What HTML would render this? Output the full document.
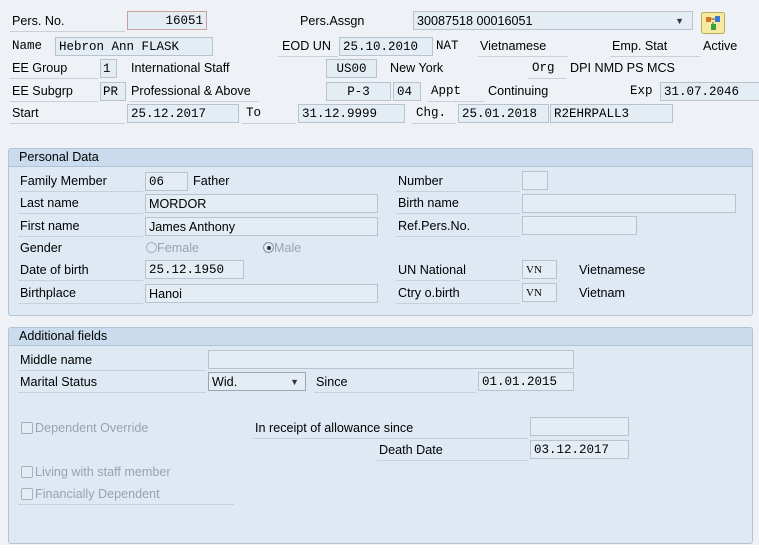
<!DOCTYPE html>
<html><head><meta charset="utf-8"><style>
*{margin:0;padding:0;box-sizing:border-box}
body{width:759px;height:554px;background:#fff;position:relative;overflow:hidden;font-family:"Liberation Sans",sans-serif;font-size:12.6px;color:#000}
#top{position:absolute;left:0;top:0;width:759px;height:545px;background:#eef2f7}
.t{position:absolute;white-space:nowrap;line-height:19px}
.m{font-family:"Liberation Mono",monospace;font-size:12.5px}
.f{position:absolute;height:19px;background:#e4ecf4;border:1px solid #b9c3cd;line-height:18px;padding:0 3px;white-space:nowrap;font-family:"Liberation Mono",monospace;font-size:12.5px}
.fs{font-family:"Liberation Sans",sans-serif;font-size:12.6px}
.u{position:absolute;height:1px;background:#c8d0d8}
.panel{position:absolute;left:8px;width:745px;background:#dfe9f3;border:1px solid #b3c3d3;border-radius:3px}
.ph{height:18px;background:#c9dbec;border-bottom:1px solid #b3c3d3;padding-left:10px;line-height:17px}
.g{color:#9aa3ad}
.cb{position:absolute;width:12px;height:12px;border:1px solid #a9b2bb;border-radius:2px;background:#e4ecf4}
</style></head><body>
<div id="top"></div>

<div class="t" style="left:12px;top:12px">Pers. No.</div><div class="u" style="left:10px;top:31px;width:115px"></div>
<div class="f" style="left:127px;top:11px;width:80px;text-align:right;border-color:#c9a0a0">16051</div>
<div class="t" style="left:300px;top:12px">Pers.Assgn</div>
<div class="f fs" style="left:413px;top:11px;width:280px">30087518 00016051<span style="position:absolute;right:8px;top:0;font-size:9px;color:#334">&#9660;</span></div>
<svg style="position:absolute;left:701px;top:12px" width="24" height="22"><rect x="0.5" y="0.5" width="23" height="21" rx="2" fill="#f8e9a0" stroke="#b9a860"/><rect x="5" y="5" width="5" height="5" fill="#e07020"/><rect x="14" y="4" width="5" height="6" fill="#3a7ad0"/><rect x="10" y="12" width="5" height="6" fill="#40a040"/><path d="M10 7h4M12 10v2" stroke="#555"/></svg>

<div class="t m" style="left:12px;top:37px">Name</div>
<div class="f" style="left:55px;top:37px;width:158px">Hebron Ann FLASK</div>
<div class="t" style="left:282px;top:37px">EOD UN</div><div class="u" style="left:278px;top:56px;width:60px"></div>
<div class="f" style="left:339px;top:37px;width:94px">25.10.2010</div>
<div class="t m" style="left:436px;top:37px">NAT</div>
<div class="t" style="left:480px;top:37px">Vietnamese</div><div class="u" style="left:478px;top:56px;width:90px"></div>
<div class="t" style="left:612px;top:37px">Emp. Stat</div><div class="u" style="left:610px;top:56px;width:90px"></div>
<div class="t" style="left:703px;top:37px">Active</div>

<div class="t" style="left:12px;top:59px">EE Group</div><div class="u" style="left:10px;top:78px;width:88px"></div>
<div class="f" style="left:100px;top:59px;width:17px;padding:0 2px">1</div>
<div class="t" style="left:131px;top:59px">International Staff</div>
<div class="f" style="left:326px;top:59px;width:51px;text-align:center">US00</div>
<div class="t" style="left:390px;top:59px">New York</div>
<div class="t m" style="left:532px;top:59px">Org</div><div class="u" style="left:528px;top:78px;width:38px"></div>
<div class="t" style="left:570px;top:59px">DPI NMD PS MCS</div>

<div class="t" style="left:12px;top:82px">EE Subgrp</div><div class="u" style="left:10px;top:101px;width:88px"></div>
<div class="f" style="left:100px;top:82px;width:26px;padding:0 2px">PR</div>
<div class="t" style="left:131px;top:82px">Professional &amp; Above</div><div class="u" style="left:129px;top:101px;width:130px"></div>
<div class="f" style="left:326px;top:82px;width:65px;text-align:center">P-3</div>
<div class="f" style="left:393px;top:82px;width:28px">04</div>
<div class="t m" style="left:431px;top:82px">Appt</div><div class="u" style="left:428px;top:101px;width:56px"></div>
<div class="t" style="left:488px;top:82px">Continuing</div>
<div class="t m" style="left:630px;top:82px">Exp</div>
<div class="f" style="left:660px;top:82px;width:105px">31.07.2046</div>

<div class="t" style="left:12px;top:104px">Start</div><div class="u" style="left:10px;top:123px;width:115px"></div>
<div class="f" style="left:127px;top:104px;width:112px">25.12.2017</div>
<div class="t m" style="left:246px;top:104px">To</div><div class="u" style="left:242px;top:123px;width:54px"></div>
<div class="f" style="left:298px;top:104px;width:107px">31.12.9999</div>
<div class="t m" style="left:416px;top:104px">Chg.</div><div class="u" style="left:412px;top:123px;width:44px"></div>
<div class="f" style="left:458px;top:104px;width:91px">25.01.2018</div>
<div class="f" style="left:550px;top:104px;width:123px">R2EHRPALL3</div>

<div class="panel" style="top:148px;height:168px"><div class="ph">Personal Data</div></div>
<div class="t" style="left:20px;top:172px">Family Member</div><div class="u" style="left:18px;top:191px;width:125px"></div>
<div class="f" style="left:145px;top:172px;width:43px">06</div>
<div class="t" style="left:193px;top:172px">Father</div>
<div class="t" style="left:20px;top:194px">Last name</div><div class="u" style="left:18px;top:213px;width:125px"></div>
<div class="f fs" style="left:145px;top:194px;width:233px">MORDOR</div>
<div class="t" style="left:20px;top:217px">First name</div><div class="u" style="left:18px;top:236px;width:125px"></div>
<div class="f fs" style="left:145px;top:217px;width:233px">James Anthony</div>
<div class="t" style="left:20px;top:239px">Gender</div>
<div class="t g" style="left:146px;top:239px"><span style="display:inline-block;width:11px;height:11px;border:1px solid #a9b2bb;border-radius:50%;vertical-align:-1px"></span>Female</div>
<div class="t g" style="left:263px;top:239px"><span style="display:inline-block;width:11px;height:11px;border:1px solid #8a939d;border-radius:50%;vertical-align:-1px;position:relative"><span style="position:absolute;left:2.5px;top:2.5px;width:4px;height:4px;background:#333;border-radius:50%"></span></span>Male</div>
<div class="t" style="left:20px;top:261px">Date of birth</div><div class="u" style="left:18px;top:280px;width:125px"></div>
<div class="f" style="left:145px;top:260px;width:99px">25.12.1950</div>
<div class="t" style="left:20px;top:284px">Birthplace</div><div class="u" style="left:18px;top:303px;width:125px"></div>
<div class="f fs" style="left:145px;top:284px;width:233px">Hanoi</div>

<div class="t" style="left:398px;top:172px">Number</div><div class="u" style="left:396px;top:191px;width:124px"></div>
<div class="f" style="left:522px;top:171px;width:26px"></div>
<div class="t" style="left:398px;top:194px">Birth name</div><div class="u" style="left:396px;top:213px;width:124px"></div>
<div class="f" style="left:522px;top:194px;width:214px"></div>
<div class="t" style="left:398px;top:217px">Ref.Pers.No.</div><div class="u" style="left:396px;top:236px;width:124px"></div>
<div class="f" style="left:522px;top:216px;width:115px"></div>
<div class="t" style="left:398px;top:261px">UN National</div><div class="u" style="left:396px;top:280px;width:124px"></div>
<div class="f" style="left:522px;top:260px;width:35px;font-size:11px;font-family:'Liberation Serif',serif">VN</div>
<div class="t" style="left:579px;top:261px">Vietnamese</div>
<div class="t" style="left:398px;top:284px">Ctry o.birth</div><div class="u" style="left:396px;top:303px;width:124px"></div>
<div class="f" style="left:522px;top:283px;width:35px;font-size:11px;font-family:'Liberation Serif',serif">VN</div>
<div class="t" style="left:579px;top:284px">Vietnam</div>

<div class="panel" style="top:327px;height:217px"><div class="ph">Additional fields</div></div>
<div class="t" style="left:20px;top:351px">Middle name</div><div class="u" style="left:18px;top:370px;width:188px"></div>
<div class="f" style="left:208px;top:350px;width:366px"></div>
<div class="t" style="left:20px;top:373px">Marital Status</div><div class="u" style="left:18px;top:392px;width:188px"></div>
<div class="f fs" style="left:208px;top:372px;width:98px;border-color:#9aa5b0">Wid.<span style="position:absolute;right:6px;top:0;font-size:9px;color:#334">&#9660;</span></div>
<div class="t" style="left:316px;top:373px">Since</div><div class="u" style="left:314px;top:392px;width:162px"></div>
<div class="f" style="left:478px;top:372px;width:96px">01.01.2015</div>

<div class="cb" style="left:21px;top:422px"></div>
<div class="t g" style="left:35px;top:419px">Dependent Override</div>
<div class="t" style="left:255px;top:419px">In receipt of allowance since</div><div class="u" style="left:253px;top:438px;width:275px"></div>
<div class="f" style="left:530px;top:417px;width:99px"></div>
<div class="t" style="left:379px;top:441px">Death Date</div><div class="u" style="left:377px;top:460px;width:151px"></div>
<div class="f" style="left:530px;top:440px;width:99px">03.12.2017</div>

<div class="cb" style="left:21px;top:466px"></div>
<div class="t g" style="left:35px;top:463px">Living with staff member</div>
<div class="cb" style="left:21px;top:488px"></div>
<div class="t g" style="left:35px;top:485px">Financially Dependent</div>
<div class="u" style="left:18px;top:504px;width:216px"></div>
</body></html>
